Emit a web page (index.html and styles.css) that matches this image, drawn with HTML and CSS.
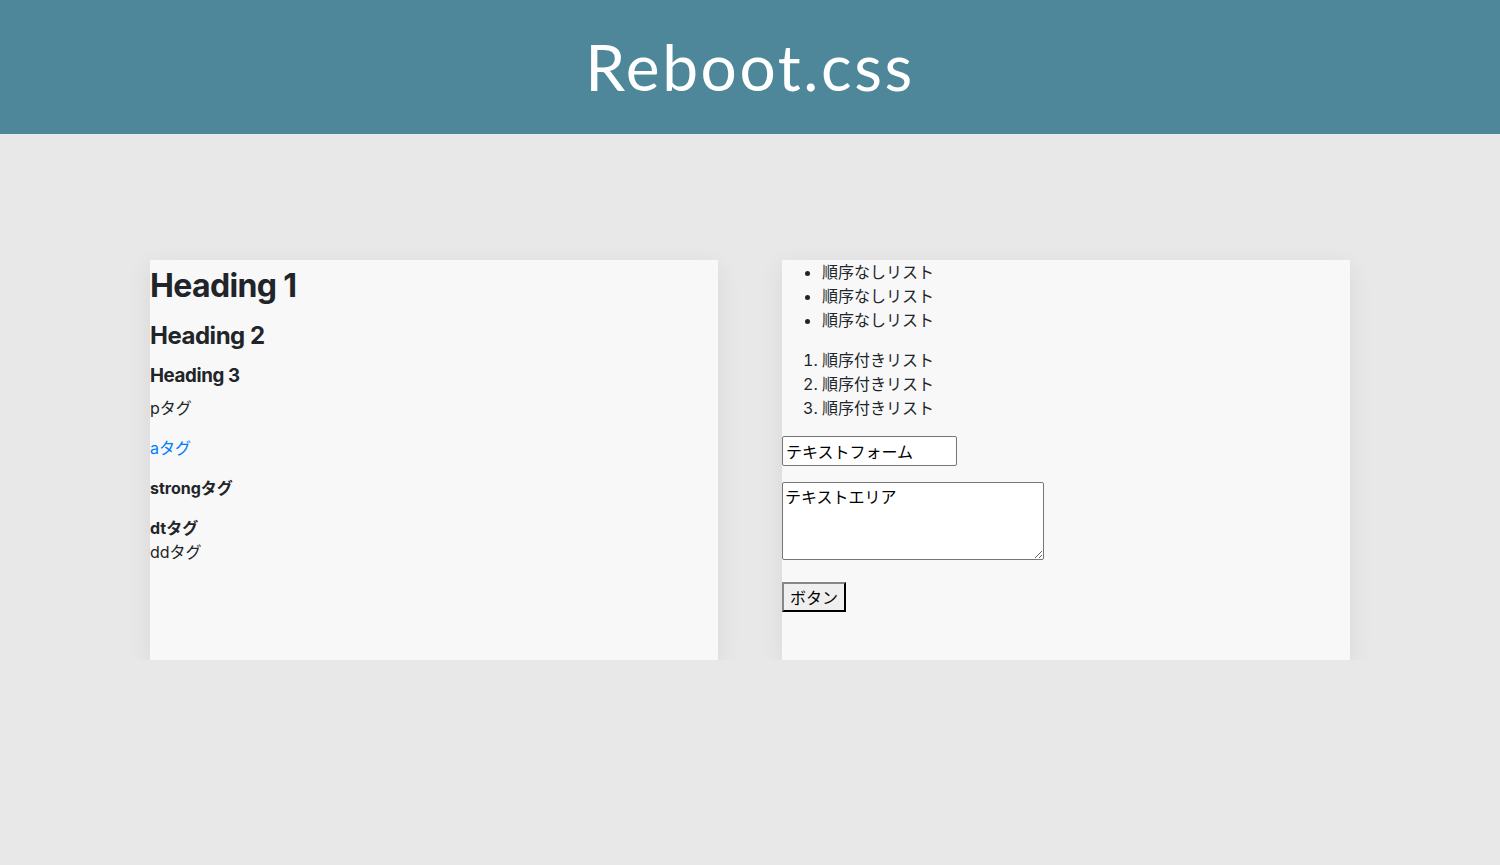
FILE: index.html
```html
<!DOCTYPE html>
<html lang="ja">
<head>
    <meta charset="UTF-8">
    <meta name="viewport" content="width=device-width, initial-scale=1.0">
    <title>Reboot.css</title>
    <link rel="stylesheet" href="styles.css">
</head>
<body>
    <header class="header">
        <h1 class="header-title">Reboot.css</h1>
    </header>

    <main class="main">
        <section class="card">
            <h1>Heading 1</h1>
            <h2>Heading 2</h2>
            <h3>Heading 3</h3>
            <p>pタグ</p>
            <p><a href="#">aタグ</a></p>
            <p><strong>strongタグ</strong></p>
            <dl>
                <dt>dtタグ</dt>
                <dd>ddタグ</dd>
            </dl>
        </section>

        <section class="card">
            <ul>
                <li>順序なしリスト</li>
                <li>順序なしリスト</li>
                <li>順序なしリスト</li>
            </ul>
            <ol>
                <li>順序付きリスト</li>
                <li>順序付きリスト</li>
                <li>順序付きリスト</li>
            </ol>
            <form class="form">
                <input class="text-input" type="text" value="テキストフォーム">
                <textarea class="text-area">テキストエリア</textarea>
                <button class="btn" type="button">ボタン</button>
            </form>
        </section>
    </main>
</body>
</html>
```

FILE: styles.css
```css
*, *::before, *::after {
    box-sizing: border-box;
}
body {
    margin: 0;
    font-family: Inter, "Noto Sans CJK JP", sans-serif;
    font-size: 16px;
    line-height: 1.5;
    color: #212529;
    background: #e8e8e8;
}
h1, h2, h3 {
    margin: 0 0 0.5rem;
    font-weight: 700;
    line-height: 1.5;
    letter-spacing: -0.02em;
}
h1 {
    font-size: 2em;
}
h2 {
    font-size: 1.5em;
}
h3 {
    font-size: 1.17em;
}
p, ul, ol, dl {
    margin: 0 0 1rem;
}
ul, ol {
    padding-left: 40px;
}
dt {
    font-weight: 700;
}
dd {
    margin: 0;
}
a {
    color: #007bff;
    text-decoration: none;
}

.header {
    background: #4d8799;
    height: 134px;
    display: flex;
    align-items: center;
    justify-content: center;
}
.header-title {
    margin: 0;
    color: #fff;
    font-family: Lato, sans-serif;
    font-weight: 400;
    font-size: 64px;
    line-height: 1;
    letter-spacing: 2.6px;
}

.main {
    width: 1200px;
    margin: 0 auto;
    padding-top: 126px;
    display: grid;
    grid-template-columns: 1fr 1fr;
    gap: 64px;
}
.card {
    background: #f8f8f8;
    height: 400px;
    box-shadow: 0 6px 24px rgba(0, 0, 0, 0.07);
}
.card h1 {
    padding-top: 2px;
}
.card h3 {
    margin-bottom: 6px;
}

.form {
    margin: 0;
}
.text-input {
    display: block;
    width: 175px;
    height: 30px;
    margin: 0 0 16px;
    padding: 1px 3px;
    font-family: "Noto Sans CJK JP", sans-serif;
    font-size: 16px;
    color: #000;
    background: #fff;
    border: 1px solid #767676;
    border-radius: 2px;
}
.text-area {
    display: block;
    width: 262px;
    height: 78px;
    margin: 0 0 22px;
    padding: 2px 2px;
    font-family: "Noto Sans CJK JP", sans-serif;
    font-size: 16px;
    line-height: 1.4;
    color: #000;
    background: #fff;
    border: 1px solid #767676;
    border-radius: 2px;
}
.btn {
    display: block;
    width: 64px;
    height: 30px;
    padding: 0;
    font-family: "Noto Sans CJK JP", sans-serif;
    font-size: 16px;
    color: #000;
    background: #efefef;
    border: 2px outset #333;
}
```
